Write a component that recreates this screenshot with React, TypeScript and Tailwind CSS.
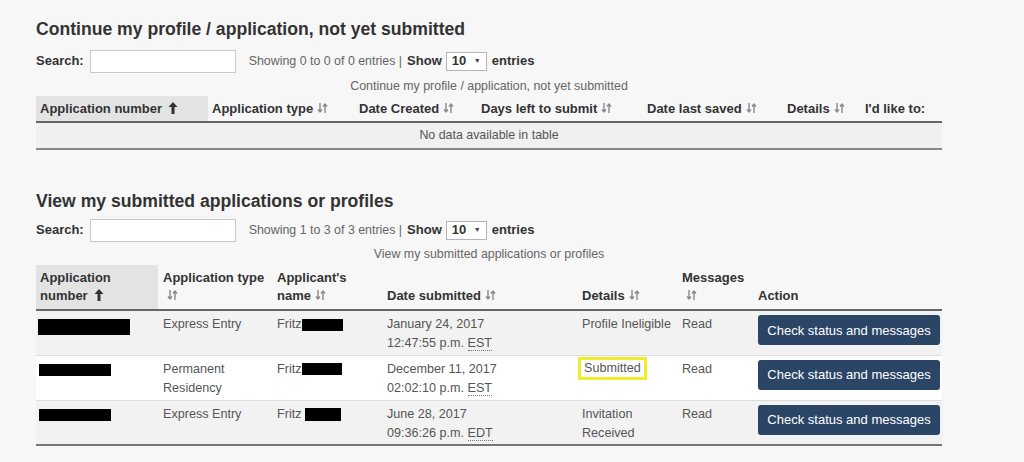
import React from "react";

const SortBoth = () => (
  <svg width="11" height="12" viewBox="0 0 11 12" className="inline-block ml-1 align-[-1px]">
    <path d="M3 1v9M1 7.5l2 2.5 2-2.5" stroke="#8a8a8a" strokeWidth="1.4" fill="none" />
    <path d="M8 11V2M6 4.5L8 2l2 2.5" stroke="#8a8a8a" strokeWidth="1.4" fill="none" />
  </svg>
);

const SortUp = () => (
  <svg width="10" height="12" viewBox="0 0 10 12" className="inline-block ml-1.5 align-[-1px]">
    <path d="M5 0L0.5 5H3.5V12H6.5V5H9.5Z" fill="#333" />
  </svg>
);

const Toolbar = ({ info, mt }: { info: string; mt: string }) => (
  <div className={`flex items-center h-[24px] text-[12.4px] ${mt}`}>
    <span className="font-bold text-[13px] text-[#333]">Search:</span>
    <input className="ml-[6px] w-[146px] h-[23px] bg-white border border-[#c8c8c8] outline-none" />
    <span className="ml-[13px] text-[#666]">{info} |</span>
    <span className="ml-[5px] font-bold text-[13px] text-[#333]">Show</span>
    <span className="ml-[4px] flex items-center w-[41px] h-[19px] bg-white border border-[#b5b5b5] px-[5px] font-bold text-[13px] text-[#333]">
      10
      <span className="ml-auto text-[7px] text-[#444]">▼</span>
    </span>
    <span className="ml-[5px] font-bold text-[13px] text-[#333]">entries</span>
  </div>
);

const Redact = ({ w, h, ml = 0 }: { w: number; h: number; ml?: number }) => (
  <span className="inline-block bg-black align-middle" style={{ width: w, height: h, marginLeft: ml }} />
);

const Btn = () => (
  <button className="w-[182px] h-[30px] bg-[#2b4566] text-white text-[13px] rounded-[3px]">
    Check status and messages
  </button>
);

const Abbr = ({ t }: { t: string }) => (
  <span className="border-b border-dotted border-[#777]">{t}</span>
);

export default function App() {
  const td = "px-[5px] pt-[4px] align-top";
  return (
    <div className="min-h-[462px] bg-[#f7f7f7] pl-[36px] pt-[17px] text-[#333]" style={{ fontFamily: '"Liberation Sans", Arial, sans-serif' }}>
      <h2 className="text-[17.6px] font-bold leading-[24px] text-[#333]">
        Continue my profile / application, not yet submitted
      </h2>
      <Toolbar info="Showing 0 to 0 of 0 entries" mt="mt-2" />
      <table className="w-[906px] table-fixed border-collapse text-[13px] mt-[3px]">
        <caption className="text-[#666] text-[12.4px] h-[20px] leading-[20px]">
          Continue my profile / application, not yet submitted
        </caption>
        <colgroup>
          <col className="w-[172px]" />
          <col className="w-[146px]" />
          <col className="w-[122px]" />
          <col className="w-[166px]" />
          <col className="w-[140px]" />
          <col className="w-[78px]" />
          <col className="w-[82px]" />
        </colgroup>
        <thead>
          <tr className="h-[26px] border-b-2 border-[#666] font-bold text-left">
            <th className="bg-[#e3e3e3] px-[4px]">Application number<SortUp /></th>
            <th className="px-[4px]">Application type<SortBoth /></th>
            <th className="px-[5px]">Date Created<SortBoth /></th>
            <th className="px-[5px]">Days left to submit<SortBoth /></th>
            <th className="px-[5px]">Date last saved<SortBoth /></th>
            <th className="px-[5px]">Details<SortBoth /></th>
            <th className="px-[5px]">I'd like to:</th>
          </tr>
        </thead>
        <tbody>
          <tr className="h-[27px] bg-[#f0f0f0] border-b-2 border-[#888]">
            <td colSpan={7} className="text-center text-[12.4px] text-[#555]">No data available in table</td>
          </tr>
        </tbody>
      </table>

      <h2 className="mt-[39px] text-[17.6px] font-bold leading-[24px] text-[#333]">
        View my submitted applications or profiles
      </h2>
      <Toolbar info="Showing 1 to 3 of 3 entries" mt="mt-[5px]" />
      <table className="w-[906px] table-fixed border-collapse text-[13px] mt-[1px]">
        <caption className="text-[#666] text-[12.4px] h-[22px] leading-[22px]">
          View my submitted applications or profiles
        </caption>
        <colgroup>
          <col className="w-[122px]" />
          <col className="w-[114px]" />
          <col className="w-[110px]" />
          <col className="w-[195px]" />
          <col className="w-[100px]" />
          <col className="w-[76px]" />
          <col className="w-[189px]" />
        </colgroup>
        <thead>
          <tr className="h-[45px] border-b-2 border-[#666] font-bold text-left leading-[18px]">
            <th className="bg-[#e3e3e3] px-[4px] align-bottom pb-[4px]">Application<br />number<SortUp /></th>
            <th className="px-[5px] align-bottom pb-[4px]">Application type<br /><SortBoth /></th>
            <th className="px-[5px] align-bottom pb-[4px]">Applicant's<br />name<SortBoth /></th>
            <th className="px-[5px] align-bottom pb-[4px]">Date submitted<SortBoth /></th>
            <th className="px-[5px] align-bottom pb-[4px]">Details<SortBoth /></th>
            <th className="px-[5px] align-bottom pb-[4px]">Messages<br /><SortBoth /></th>
            <th className="px-[5px] align-bottom pb-[4px]">Action</th>
          </tr>
        </thead>
        <tbody className="text-[#555] text-[12.6px] leading-[19px]">
          <tr className="h-[45px] bg-[#f2f2f2] border-b border-[#ddd]">
            <td className="px-[2px] pt-[6px] align-top"><Redact w={92} h={16} /></td>
            <td className={td}>Express Entry</td>
            <td className={td}>Fritz<Redact w={41} h={12} ml={1} /></td>
            <td className={td}>January 24, 2017<br />12:47:55 p.m. <Abbr t="EST" /></td>
            <td className="pl-[5px] pr-0 pt-[4px] align-top whitespace-nowrap">Profile Ineligible</td>
            <td className={td}>Read</td>
            <td className="px-[5px] pt-[4px] align-top"><Btn /></td>
          </tr>
          <tr className="h-[45px] bg-white border-b border-[#ddd]">
            <td className="px-[3px] pt-[5px] align-top"><Redact w={72} h={12} /></td>
            <td className={td}>Permanent<br />Residency</td>
            <td className={td}>Fritz<Redact w={40} h={12} ml={1} /></td>
            <td className={td}>December 11, 2017<br />02:02:10 p.m. <Abbr t="EST" /></td>
            <td className="px-[1px] pt-[1px] align-top">
              <span className="inline-block border-[3px] border-[#f1ec2a] px-[3px] leading-[17px]">Submitted</span>
            </td>
            <td className={td}>Read</td>
            <td className="px-[5px] pt-[4px] align-top"><Btn /></td>
          </tr>
          <tr className="h-[45px] bg-[#f2f2f2] border-b-2 border-[#777]">
            <td className="px-[3px] pt-[5px] align-top"><Redact w={72} h={12} /></td>
            <td className={td}>Express Entry</td>
            <td className={td}>Fritz<Redact w={36} h={13} ml={4} /></td>
            <td className={td}>June 28, 2017<br />09:36:26 p.m. <Abbr t="EDT" /></td>
            <td className={td}>Invitation<br />Received</td>
            <td className={td}>Read</td>
            <td className="px-[5px] pt-[4px] align-top"><Btn /></td>
          </tr>
        </tbody>
      </table>
    </div>
  );
}
